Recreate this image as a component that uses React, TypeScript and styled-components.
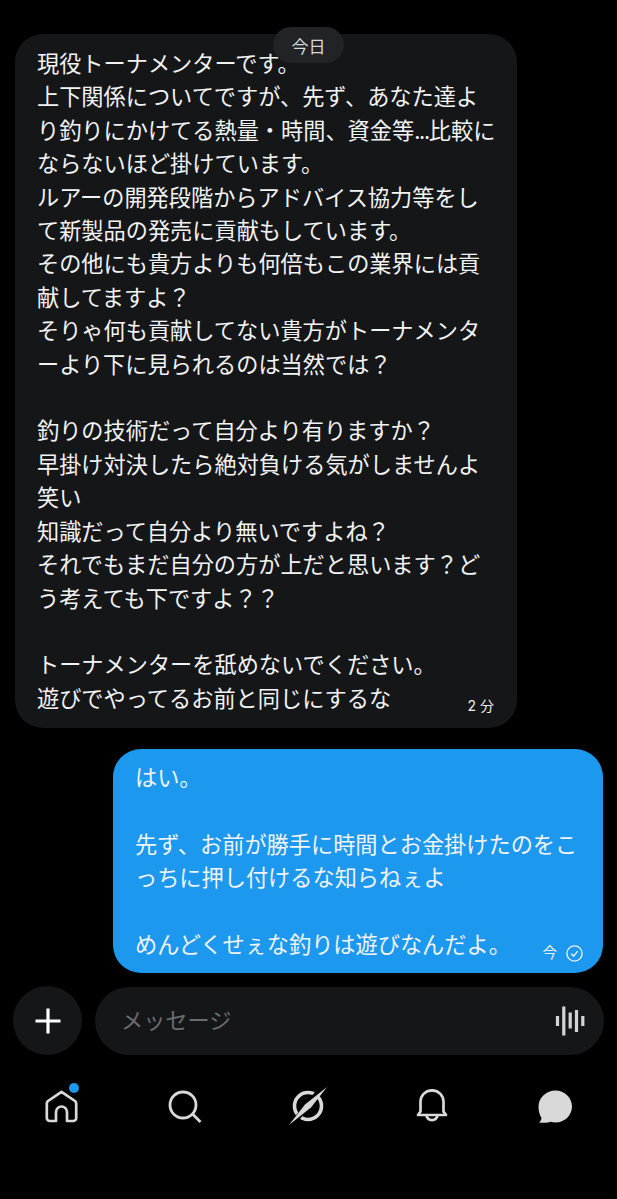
import React from "react";
import styled, { createGlobalStyle } from "styled-components";

const Global = createGlobalStyle`
  html, body { margin: 0; padding: 0; background: #000; }
  body { font-family: "Noto Sans CJK JP", "Liberation Sans", sans-serif; }
`;

const Screen = styled.div`
  width: 617px;
  height: 1199px;
  overflow: hidden;
  background: #000;
  padding-top: 34px;
  box-sizing: border-box;
  display: flex;
  flex-direction: column;
  position: relative;
`;

const Bubble = styled.div<{ $mine?: boolean }>`
  position: relative;
  box-sizing: border-box;
  border-radius: 28px;
  color: #f2f3f4;
  font-size: 22.2px;
  line-height: 33.4px;
  white-space: pre;
  background: ${(p) => (p.$mine ? "#1d98ef" : "#151618")};
  width: ${(p) => (p.$mine ? "490px" : "502px")};
  height: ${(p) => (p.$mine ? "224px" : "694px")};
  margin-left: ${(p) => (p.$mine ? "113px" : "15px")};
  margin-top: ${(p) => (p.$mine ? "21px" : "0")};
  padding: ${(p) => (p.$mine ? "11px 0 0 22px" : "12px 0 0 22px")};
`;

const Dots = styled.span`
  letter-spacing: -1.3px;
`;

const DatePill = styled.div`
  position: absolute;
  top: 27px;
  left: 273px;
  width: 71px;
  height: 36px;
  border-radius: 18px;
  background: #212327;
  color: #d6d9db;
  font-size: 17px;
  display: flex;
  align-items: center;
  justify-content: center;
`;

const Stamp = styled.div`
  position: absolute;
  right: 23px;
  bottom: 13px;
  font-size: 14px;
  line-height: 18px;
  color: #eef0f1;
  font-family: "Inter", "Noto Sans CJK JP", sans-serif;
  display: flex;
  align-items: center;
`;

const SentStamp = styled(Stamp)`
  right: 20px;
  bottom: 11px;
  gap: 9px;
  font-size: 14.5px;
`;

const Composer = styled.div`
  display: flex;
  align-items: center;
  gap: 13px;
  margin: 13px 13px 0 13px;
`;

const PlusButton = styled.div`
  width: 69px;
  height: 69px;
  flex: none;
  border-radius: 50%;
  background: #151618;
  display: flex;
  align-items: center;
  justify-content: center;
`;

const Field = styled.div`
  flex: 1;
  height: 68px;
  border-radius: 34px;
  background: #151618;
  display: flex;
  align-items: center;
  justify-content: space-between;
  padding: 0 19px 0 26px;
  color: #6a6d70;
  font-size: 22.2px;
`;

const Placeholder = styled.span`
  padding-bottom: 4px;
`;

const NavBar = styled.nav`
  display: grid;
  grid-template-columns: repeat(5, 1fr);
  margin-top: 27px;
`;

const NavItem = styled.div`
  height: 48px;
  position: relative;
  display: flex;
  align-items: center;
  justify-content: center;
`;

const Dot = styled.span`
  position: absolute;
  left: 69px;
  top: 1px;
  width: 10px;
  height: 10px;
  border-radius: 50%;
  background: #1d98ef;
`;

const openingLines = `現役トーナメンターです。
上下関係についてですが、先ず、あなた達よ
り釣りにかけてる熱量・時間、資金等`;

const closingLines = `比較に
ならないほど掛けています。
ルアーの開発段階からアドバイス協力等をし
て新製品の発売に貢献もしています。
その他にも貴方よりも何倍もこの業界には貢
献してますよ？
そりゃ何も貢献してない貴方がトーナメンタ
ーより下に見られるのは当然では？

釣りの技術だって自分より有りますか？
早掛け対決したら絶対負ける気がしませんよ
笑い
知識だって自分より無いですよね？
それでもまだ自分の方が上だと思います？ど
う考えても下ですよ？？

トーナメンターを舐めないでください。
遊びでやってるお前と同じにするな`;

const secondMessage = `はい。

先ず、お前が勝手に時間とお金掛けたのをこ
っちに押し付けるな知らねぇよ

めんどくせぇな釣りは遊びなんだよ。`;

const stroke = "#d9d9d9";

export default function App() {
  return (
    <Screen>
      <Global />
      <Bubble>
        {openingLines}
        <Dots>...</Dots>
        {closingLines}
        <Stamp>2 分</Stamp>
      </Bubble>
      <DatePill>今日</DatePill>
      <Bubble $mine>
        {secondMessage}
        <SentStamp>
          <span>今</span>
          <svg width="17" height="17" viewBox="0 0 17 17" fill="none" stroke="#eef0f1" strokeWidth="1.4">
            <circle cx="8.5" cy="8.5" r="7.6" />
            <path d="M5.3 8.8l2.3 2.3 4-5" />
          </svg>
        </SentStamp>
      </Bubble>
      <Composer>
        <PlusButton>
          <svg width="28" height="28" viewBox="0 0 28 28" stroke="#fff" strokeWidth="3.2">
            <path d="M14 1.500v25M1.500 14h25" />
          </svg>
        </PlusButton>
        <Field>
          <Placeholder>メッセージ</Placeholder>
          <svg width="30" height="30" viewBox="0 0 30 30" stroke="#d4d4d4" strokeWidth="3.2">
            <path d="M2.500 10v10M8.800 0.500v29M15.200 6.500v16M21.500 4v22M27.800 10v10" />
          </svg>
        </Field>
      </Composer>
      <NavBar>
        <NavItem>
          <Dot />
          <svg width="33" height="33" viewBox="0 0 33 33" fill="none" stroke={stroke} strokeWidth="2.7" strokeLinejoin="round">
            <path d="M1.800 13.500Q1.800 12 3 11L16.500 1.800 30 11q1.200 1 1.200 2.500V28a3 3 0 0 1-3 3H22V22a5.500 5.500 0 0 0-11 0v9H4.800a3 3 0 0 1-3-3z" />
          </svg>
        </NavItem>
        <NavItem>
          <svg width="34" height="33" viewBox="0 0 34 33" fill="none" stroke={stroke} strokeWidth="2.8">
            <circle cx="15" cy="15" r="13" />
            <path d="M24.500 24l8 8" />
          </svg>
        </NavItem>
        <NavItem>
          <svg width="40" height="40" viewBox="0 0 40 40" fill="none">
            <circle cx="20" cy="20" r="13.500" stroke={stroke} strokeWidth="3.600" />
            <path d="M33 3L6 36" stroke="#000" strokeWidth="5.500" />
            <path d="M39 1L23 21.500 1 39 17 18.500z" fill={stroke} />
          </svg>
        </NavItem>
        <NavItem>
          <svg width="32" height="34" viewBox="0 0 32 34" fill="none" stroke={stroke} strokeWidth="2.7" strokeLinejoin="round">
            <path d="M2 26l2.500-3.500V12.800a11.500 11.500 0 0 1 23 0V22.500L30 26z" />
            <path d="M10.500 26.500a5.600 5.600 0 0 0 11 0" />
          </svg>
        </NavItem>
        <NavItem>
          <svg width="34" height="33" viewBox="0 0 34 33" fill={stroke}>
            <path d="M17.500 0.500C26.500 0.500 34 7.500 34 16.500S26.500 32.500 17.500 32.500c-1.800 0-3.500-.3-5-.8-2 1.100-6.500 1.300-11.500.8 1.500-1.300 2.300-2.600 2.500-4.500C1.500 25 0.500 21 0.500 16.500 0.500 7.500 8.500 0.500 17.500 0.500z" />
          </svg>
        </NavItem>
      </NavBar>
    </Screen>
  );
}
